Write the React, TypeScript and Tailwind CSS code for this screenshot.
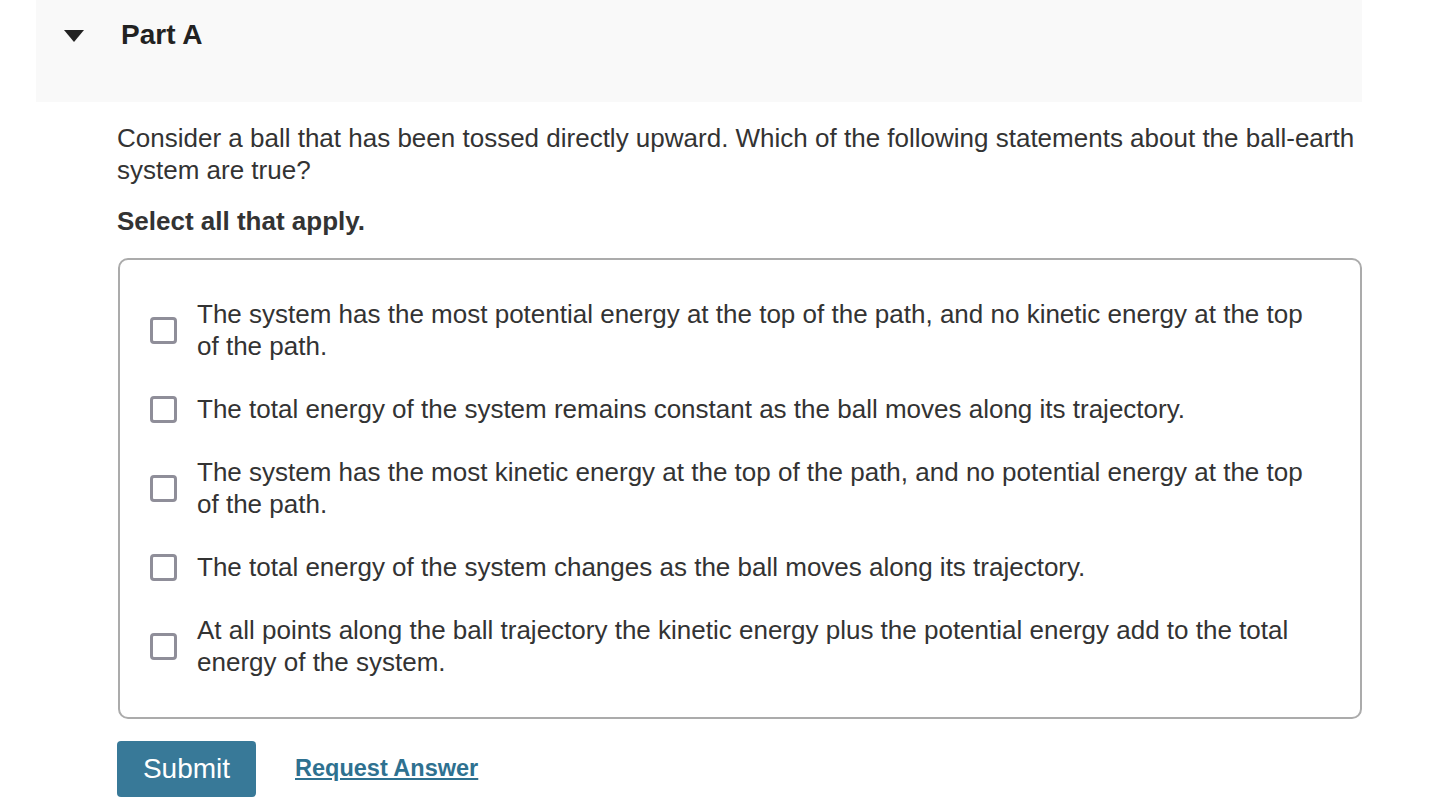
import React from "react";

const options = [
  "The system has the most potential energy at the top of the path, and no kinetic energy at the top of the path.",
  "The total energy of the system remains constant as the ball moves along its trajectory.",
  "The system has the most kinetic energy at the top of the path, and no potential energy at the top of the path.",
  "The total energy of the system changes as the ball moves along its trajectory.",
  "At all points along the ball trajectory the kinetic energy plus the potential energy add to the total energy of the system.",
];

export default function App() {
  return (
    <div
      className="min-h-[812px] bg-white text-[#333333]"
      style={{ fontFamily: '"Liberation Sans", Arial, Helvetica, sans-serif' }}
    >
      <div className="ml-[36px] w-[1326px] h-[102px] bg-[#f9f9f9] flex items-start">
        <div className="flex items-center h-[70px]">
          <svg width="20" height="12" viewBox="0 0 20 12" className="ml-[28px] mt-[2px]">
            <polygon points="0,0 20,0 10,12" fill="#222222" />
          </svg>
          <span className="ml-[37px] text-[28px] font-bold text-[#222222] leading-[32px]">Part A</span>
        </div>
      </div>
      <div className="ml-[117px] w-[1245px]">
        <p className="mt-[20px] text-[26px] leading-[32px]">
          Consider a ball that has been tossed directly upward. Which of the following statements about the ball-earth system are true?
        </p>
        <p className="mt-[19px] text-[26px] leading-[32px] font-bold">Select all that apply.</p>
        <div className="mt-[21px] ml-[1px] w-[1244px] border-2 border-[#ababab] rounded-[10px] pt-[38px] pb-[39px] pl-[30px] pr-[40px] flex flex-col gap-[31px]">
          {options.map((o, i) => (
            <label key={i} className="flex items-center">
              <span className="w-[27px] h-[27px] shrink-0 border-[3px] border-[#8f8e99] rounded-[4px] bg-white"></span>
              <span className="ml-[20px] text-[26px] leading-[32px]">{o}</span>
            </label>
          ))}
        </div>
        <div className="mt-[22px] flex items-center">
          <button className="w-[139px] h-[56px] bg-[#387998] text-white text-[28px] rounded-[4px]">
            Submit
          </button>
          <a className="ml-[39px] text-[23.5px] font-bold text-[#2e7190] underline" href="#">
            Request Answer
          </a>
        </div>
      </div>
    </div>
  );
}
